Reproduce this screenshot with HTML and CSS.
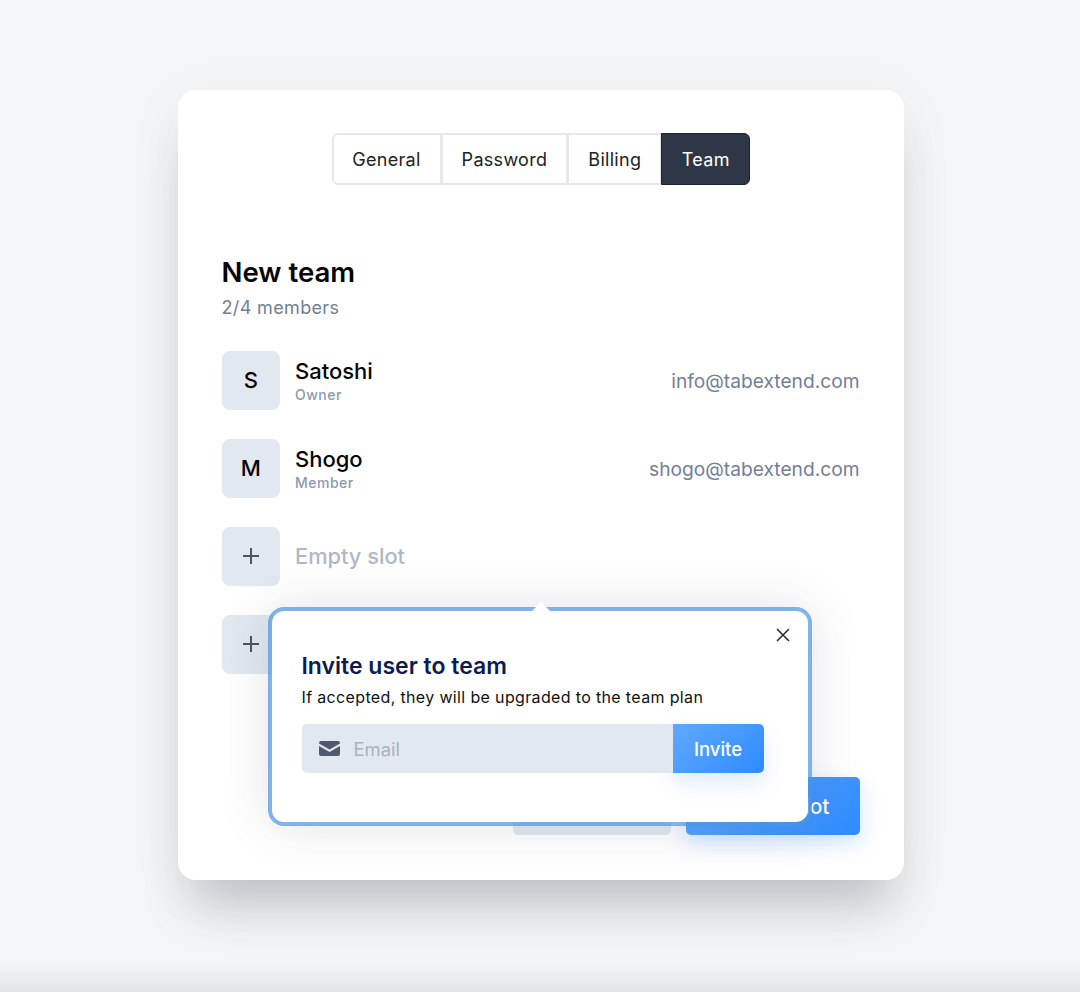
FILE: index.html
```html
<!DOCTYPE html>
<html lang="en">

<head>
    <meta charset="UTF-8">
    <title>Team settings</title>
    <link rel="stylesheet" href="styles.css">
</head>

<body>
<div class="card">
    <div class="tabs">
        <button class="tab" type="button">General</button>
        <button class="tab" type="button">Password</button>
        <button class="tab" type="button">Billing</button>
        <button class="tab active" type="button">Team</button>
    </div>

    <h1 class="team-name">New team</h1>
    <p class="team-count">2/4 members</p>

    <div class="rows">
        <div class="row">
            <div class="avatar">S</div>
            <div class="who">
                <div class="name">Satoshi</div>
                <div class="role">Owner</div>
            </div>
            <div class="email">info@tabextend.com</div>
        </div>
        <div class="row">
            <div class="avatar">M</div>
            <div class="who">
                <div class="name">Shogo</div>
                <div class="role">Member</div>
            </div>
            <div class="email">shogo@tabextend.com</div>
        </div>
        <div class="row">
            <div class="avatar">
                <svg class="plus" viewBox="0 0 18 18"><path d="M9 1v16M1 9h16"/></svg>
            </div>
            <div class="empty">Empty slot</div>
        </div>
        <div class="row">
            <div class="avatar">
                <svg class="plus" viewBox="0 0 18 18"><path d="M9 1v16M1 9h16"/></svg>
            </div>
        </div>
    </div>

    <div class="actions">
        <div class="btn-ghost"></div>
        <button class="btn-blue" type="button">Add slot</button>
    </div>

    <div class="popup">
        <span class="arrow"></span>
        <svg class="close" viewBox="0 0 14 14"><path d="M1 1l12 12M13 1L1 13"/></svg>
        <h2 class="popup-title">Invite user to team</h2>
        <p class="popup-text">If accepted, they will be upgraded to the team plan</p>
        <form class="invite" action="">
            <label class="field">
                <svg class="mail" viewBox="0 0 21 15">
                    <path d="M2 0h17a2 2 0 0 1 2 2v.6l-10.500 6-10.500-6V2a2 2 0 0 1 2-2z"/>
                    <path d="M0 4.900l10.500 6 10.500-6V13a2 2 0 0 1-2 2H2a2 2 0 0 1-2-2z"/>
                </svg>
                <input type="text" placeholder="Email">
            </label>
            <button class="invite-btn" type="button">Invite</button>
        </form>
    </div>
</div>
<div class="page-edge"></div>
</body>

</html>
```

FILE: styles.css
```css
html,
body {
    margin: 0;
    height: 992px;
    overflow: hidden;
}

body {
    display: flex;
    flex-direction: column;
    align-items: center;
    background: #f4f5f7;
    font-family: Inter, "Liberation Sans", sans-serif;
}

button {
    font-family: inherit;
    cursor: pointer;
}

.card {
    position: relative;
    box-sizing: border-box;
    width: 726px;
    height: 790px;
    margin: 90px 0 0 1px;
    padding: 43px 44px 44px;
    border-radius: 18px;
    background: #fff;
    box-shadow: 0 40px 50px -15px rgba(40, 50, 60, 0.24), 0 10px 60px rgba(40, 50, 70, 0.05);
}

.tabs {
    display: flex;
    justify-content: center;
    padding-left: 2px;
}

.tab {
    height: 52px;
    margin-left: -1px;
    padding: 0 19px;
    border: 2px solid #e8e8e8;
    background: #fff;
    color: #222;
    font-size: 18px;
    letter-spacing: 0.3px;
}

.tab:first-child {
    padding-left: 18.5px;
    border-radius: 6px 0 0 6px;
}

.tab.active {
    padding: 0 19.5px;
    border: 1px solid #1a202c;
    border-radius: 0 6px 6px 0;
    background: #2d3748;
    color: #fff;
}

.team-name {
    margin: 69px 0 0;
    color: #050505;
    font-size: 27.6px;
    font-weight: 600;
    line-height: 36px;
}

.team-count {
    margin: 5px 0 0;
    color: #718096;
    font-size: 18px;
    line-height: 26px;
    letter-spacing: 0.35px;
}

.rows {
    display: flex;
    flex-direction: column;
    gap: 29.5px;
    margin-top: 30px;
}

.row {
    display: flex;
    align-items: center;
    gap: 15px;
}

.avatar {
    display: flex;
    align-items: center;
    justify-content: center;
    width: 58.5px;
    height: 58.5px;
    border-radius: 8px;
    background: #e2e8f0;
    color: #050505;
    font-size: 22px;
    font-weight: 500;
}

.plus {
    width: 18px;
    height: 18px;
    fill: none;
    stroke: #4a5568;
    stroke-width: 2;
}

.who {
    padding-top: 1px;
}

.name {
    color: #050505;
    font-size: 22px;
    font-weight: 500;
    line-height: 26px;
}

.role {
    margin-top: 2px;
    color: #8a9ab2;
    font-size: 14px;
    font-weight: 500;
    line-height: 18px;
    letter-spacing: 0.5px;
}

.email {
    margin-left: auto;
    padding-top: 1px;
    color: #718096;
    font-size: 19.2px;
}

.empty {
    color: #b0b8c5;
    font-size: 21.8px;
    font-weight: 500;
}

.actions {
    display: flex;
    justify-content: flex-end;
    gap: 15px;
    margin-top: 103.5px;
}

.btn-ghost,
.btn-blue {
    height: 58px;
    border: 0;
    border-radius: 5px;
    font-size: 21px;
    font-weight: 500;
}

.btn-ghost {
    width: 158px;
    background: #e2e8f0;
}

.btn-blue {
    width: 174px;
    padding: 0 30px 0 0;
    background: linear-gradient(135deg, #60a9ff, #2f8bff);
    color: #fff;
    text-align: right;
    box-shadow: 0 8px 22px rgba(47, 139, 255, 0.24);
}

.popup {
    position: absolute;
    left: 90px;
    top: 517px;
    box-sizing: border-box;
    width: 544px;
    height: 219px;
    padding: 40px 30px 0;
    border: 4px solid rgba(74, 148, 222, 0.7);
    border-radius: 16px;
    background: #fff;
    background-clip: padding-box;
    box-shadow: 0 0 50px rgba(40, 50, 70, 0.13);
}

.arrow {
    position: absolute;
    left: 260px;
    top: -9px;
    width: 0;
    height: 0;
    border-left: 9px solid transparent;
    border-right: 9px solid transparent;
    border-bottom: 9px solid #fff;
}

.close {
    position: absolute;
    right: 18px;
    top: 17px;
    width: 14px;
    height: 14px;
    fill: none;
    stroke: #1f2937;
    stroke-width: 1.5;
}

.popup-title {
    margin: 0;
    color: #0b1c52;
    font-size: 23px;
    font-weight: 600;
    line-height: 30px;
}

.popup-text {
    margin: 5px 0 0;
    color: #111;
    font-size: 16px;
    line-height: 22px;
    letter-spacing: 0.35px;
}

.invite {
    display: flex;
    width: 462px;
    height: 49px;
    margin-top: 16px;
}

.field {
    position: relative;
    z-index: 1;
    display: flex;
    flex: 1;
    align-items: center;
    gap: 14px;
    padding-left: 17px;
    border-radius: 5px 0 0 5px;
    background: #e2e8f0;
}

.mail {
    width: 21px;
    height: 15px;
    fill: #4f5a72;
}

.field input {
    flex: 1;
    min-width: 0;
    border: 0;
    outline: 0;
    padding: 0;
    background: transparent;
    font-family: inherit;
    font-size: 18.4px;
}

.field input::placeholder {
    color: #a9b2c2;
}

.invite-btn {
    width: 91px;
    border: 0;
    border-radius: 0 5px 5px 0;
    background: linear-gradient(135deg, #60a9ff, #2f8bff);
    color: #fff;
    font-size: 18.5px;
    font-weight: 500;
    box-shadow: 0 10px 22px rgba(47, 139, 255, 0.16);
}

.page-edge {
    width: 100%;
    height: 30px;
    margin-top: auto;
    background: linear-gradient(rgba(0, 0, 0, 0), rgba(0, 0, 0, 0.07));
}
```
